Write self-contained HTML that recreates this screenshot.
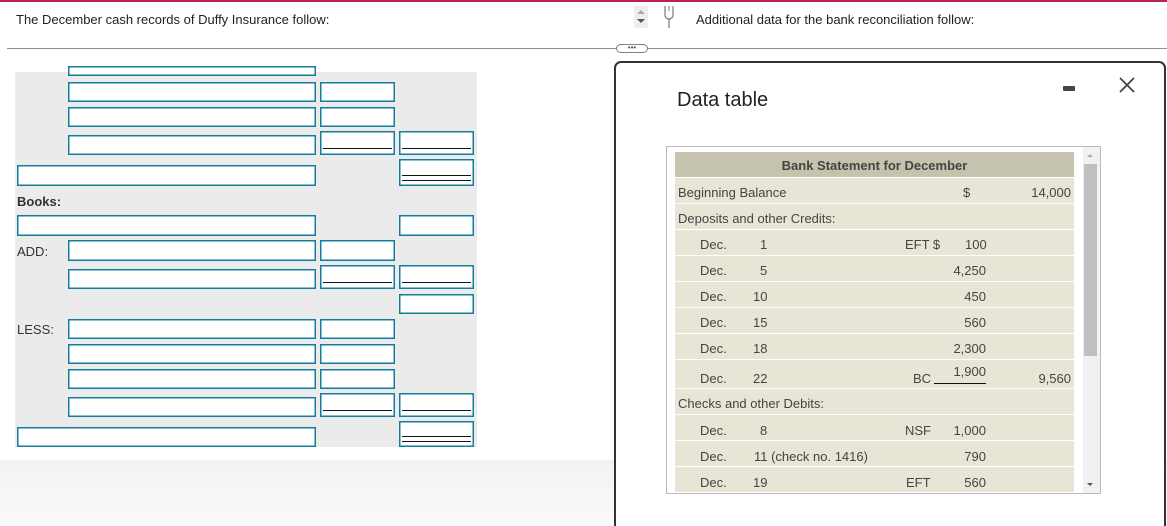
<!DOCTYPE html>
<html><head><meta charset="utf-8"><style>
*{margin:0;padding:0;box-sizing:border-box}
html,body{width:1167px;height:526px;overflow:hidden}
body{background:#fff;font-family:"Liberation Sans",Arial,sans-serif;color:#333;position:relative;font-size:13px}
#w{position:absolute;left:0;top:0;width:1167px;height:526px;overflow:hidden}
.a{position:absolute}
.in{position:absolute;background:#fff;border:1px solid #147c9c;box-shadow:inset 0 0 0 0.5px #147c9c}
.s::after{content:"";position:absolute;left:2px;right:2px;bottom:5px;border-bottom:1px solid #111}
.d::after{content:"";position:absolute;left:2px;right:2px;bottom:4px;height:4px;border-top:1px solid #111;border-bottom:1px solid #111}
.lbl{position:absolute;font-size:13px;color:#333}
.row{position:absolute;left:675px;width:399px;background:#e7e5d5;font-size:13px;color:#444}
.row span{position:absolute}
</style></head><body><div id="w">
<div class="a" style="left:0;top:0;width:1167px;height:2px;background:#b4264a"></div>
<div class="a" style="left:16px;top:12px;font-size:13px;color:#222">The December cash records of Duffy Insurance follow:</div>
<div class="a" style="left:696px;top:12px;font-size:13px;color:#222">Additional data for the bank reconciliation follow:</div>
<div class="a" style="left:634px;top:6px;width:14px;height:22px;background:#eee"></div>
<div class="a" style="left:637px;top:10px;width:0;height:0;border-left:4px solid transparent;border-right:4px solid transparent;border-bottom:4px solid #aaa"></div>
<div class="a" style="left:637px;top:19px;width:0;height:0;border-left:4px solid transparent;border-right:4px solid transparent;border-top:4px solid #555"></div>
<svg class="a" style="left:662px;top:5px" width="14" height="24"><path d="M3 1v9a4 4 0 0 0 8 0V1M7 14v9" stroke="#777" fill="none" stroke-width="1.2"/><path d="M7 1v5" stroke="#777" stroke-width="1"/></svg>
<div class="a" style="left:7px;top:48px;width:1160px;height:1px;background:#8b9299"></div>
<div class="a" style="left:616px;top:44px;width:32px;height:9px;border:1px solid #7a8290;border-radius:5px;background:#fff;font-size:8px;line-height:5px;text-align:center;color:#555">•••</div>

<div class="a" style="left:15px;top:72px;width:462px;height:375px;background:#ebebeb"></div>
<div class="a" style="left:0;top:460px;width:1167px;height:66px;background:linear-gradient(#f2f2f2,#fafafa)"></div>

<div class="in" style="left:68px;top:66px;width:248px;height:10px"></div>
<div class="in" style="left:68px;top:82px;width:248px;height:20px"></div><div class="in" style="left:320px;top:82px;width:75px;height:20px"></div>
<div class="in" style="left:68px;top:107px;width:248px;height:20px"></div><div class="in" style="left:320px;top:107px;width:75px;height:20px"></div>
<div class="in" style="left:68px;top:135px;width:248px;height:20px"></div><div class="in s" style="left:320px;top:131px;width:75px;height:24px"></div><div class="in s" style="left:399px;top:131px;width:75px;height:24px"></div>
<div class="in" style="left:17px;top:165px;width:299px;height:21px"></div><div class="in d" style="left:399px;top:159px;width:75px;height:27px"></div>
<div class="lbl" style="left:17px;top:194px;font-weight:bold">Books:</div>
<div class="in" style="left:17px;top:215px;width:299px;height:21px"></div><div class="in" style="left:399px;top:215px;width:75px;height:21px"></div>
<div class="lbl" style="left:17px;top:244px">ADD:</div>
<div class="in" style="left:68px;top:240px;width:248px;height:21px"></div><div class="in" style="left:320px;top:240px;width:75px;height:21px"></div>
<div class="in" style="left:68px;top:269px;width:248px;height:20px"></div><div class="in s" style="left:320px;top:265px;width:75px;height:24px"></div><div class="in s" style="left:399px;top:265px;width:75px;height:24px"></div>
<div class="in" style="left:399px;top:294px;width:75px;height:20px"></div>
<div class="lbl" style="left:17px;top:322px">LESS:</div>
<div class="in" style="left:68px;top:319px;width:248px;height:20px"></div><div class="in" style="left:320px;top:319px;width:75px;height:20px"></div>
<div class="in" style="left:68px;top:344px;width:248px;height:20px"></div><div class="in" style="left:320px;top:344px;width:75px;height:20px"></div>
<div class="in" style="left:68px;top:369px;width:248px;height:20px"></div><div class="in" style="left:320px;top:369px;width:75px;height:20px"></div>
<div class="in" style="left:68px;top:397px;width:248px;height:20px"></div><div class="in s" style="left:320px;top:393px;width:75px;height:24px"></div><div class="in s" style="left:399px;top:393px;width:75px;height:24px"></div>
<div class="in" style="left:17px;top:427px;width:299px;height:20px"></div><div class="in d" style="left:399px;top:421px;width:75px;height:26px"></div>

<div class="a" style="left:614px;top:61px;width:552px;height:480px;border:2px solid #333;border-radius:7px;background:#fff"></div>
<div class="a" style="left:677px;top:89px;font-size:20px;color:#222">Data table</div>
<div class="a" style="left:1063px;top:86px;width:12px;height:5px;background:#444;border-radius:1px"></div>
<svg class="a" style="left:1119px;top:77px" width="16" height="16"><path d="M1 1L15 15M15 1L1 15" stroke="#444" stroke-width="1.8"/></svg>

<div class="a" style="left:666px;top:146px;width:435px;height:348px;border:1px solid #bbb;background:#fff;overflow:hidden">
<div class="a" style="left:416px;top:0;width:18px;height:348px;background:#f1f1f1"></div>
<div class="a" style="left:417px;top:17px;width:13px;height:192px;background:#bfbfbf"></div>
<div class="a" style="left:420px;top:7px;border-left:3px solid transparent;border-right:3px solid transparent;border-bottom:3px solid #aaa"></div>
<div class="a" style="left:420px;top:336px;border-left:3px solid transparent;border-right:3px solid transparent;border-top:3px solid #555"></div>
</div>
<div class="row" style="top:152px;height:25px;background:#c5c3ad;font-weight:bold;text-align:center;line-height:28px;color:#444">Bank Statement for December</div>
<div class="row" style="top:178px;height:25px"><span style="left:3px;top:7px">Beginning Balance</span><span style="left:288px;top:7px">$</span><span style="right:3px;top:7px">14,000</span></div>
<div class="row" style="top:204px;height:25px"><span style="left:3px;top:7px">Deposits and other Credits:</span></div>
<div class="row" style="top:230px;height:25px"><span style="left:25px;top:7px">Dec.</span><span style="left:85px;top:7px">1</span><span style="left:230px;top:7px">EFT $</span><span style="left:290px;top:7px">100</span></div>
<div class="row" style="top:256px;height:25px"><span style="left:25px;top:7px">Dec.</span><span style="left:85px;top:7px">5</span><span style="right:88px;top:7px">4,250</span></div>
<div class="row" style="top:282px;height:25px"><span style="left:25px;top:7px">Dec.</span><span style="left:78px;top:7px">10</span><span style="right:88px;top:7px">450</span></div>
<div class="row" style="top:308px;height:25px"><span style="left:25px;top:7px">Dec.</span><span style="left:78px;top:7px">15</span><span style="right:88px;top:7px">560</span></div>
<div class="row" style="top:334px;height:25px"><span style="left:25px;top:7px">Dec.</span><span style="left:78px;top:7px">18</span><span style="right:88px;top:7px">2,300</span></div>
<div class="row" style="top:360px;height:28px"><span style="left:25px;top:11px">Dec.</span><span style="left:78px;top:11px">22</span><span style="left:238px;top:11px">BC</span><span style="left:259px;top:4px;width:52px;text-align:right;border-bottom:1px solid #111;height:20px">1,900</span><span style="right:3px;top:11px">9,560</span></div>
<div class="row" style="top:389px;height:25px"><span style="left:3px;top:7px">Checks and other Debits:</span></div>
<div class="row" style="top:415px;height:25px"><span style="left:25px;top:8px">Dec.</span><span style="left:85px;top:8px">8</span><span style="left:230px;top:8px">NSF</span><span style="right:88px;top:8px">1,000</span></div>
<div class="row" style="top:441px;height:25px"><span style="left:25px;top:8px">Dec.</span><span style="left:79px;top:8px">11 (check no. 1416)</span><span style="right:88px;top:8px">790</span></div>
<div class="row" style="top:467px;height:25px"><span style="left:25px;top:8px">Dec.</span><span style="left:78px;top:8px">19</span><span style="left:231px;top:8px">EFT</span><span style="right:88px;top:8px">560</span></div>
</div></body></html>
